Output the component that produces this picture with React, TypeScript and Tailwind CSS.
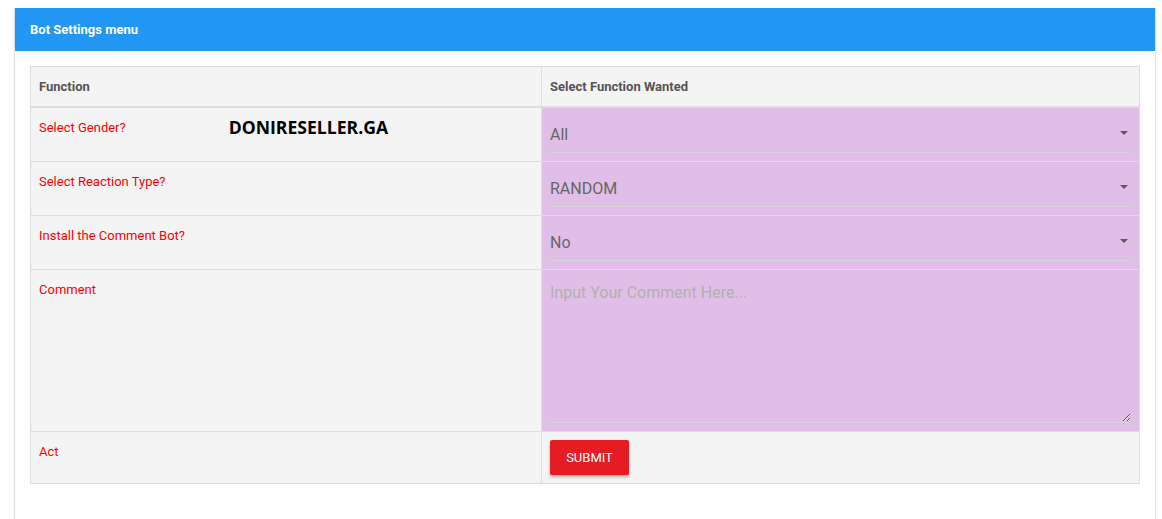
const rows = [
  { label: "Select Gender?", value: "All" },
  { label: "Select Reaction Type?", value: "RANDOM" },
  { label: "Install the Comment Bot?", value: "No" },
];

function Caret() {
  return (
    <svg width="8" height="4" viewBox="0 0 8 4" className="absolute right-[3px] top-[15px]">
      <path d="M0 0 L8 0 L4 4 Z" fill="#5a5a5a" />
    </svg>
  );
}

export default function App() {
  return (
    <div className="h-[519px] overflow-hidden bg-white pt-2 pl-[14px] pr-[6px] font-['Roboto',sans-serif]">
      <div className="border-x border-[#e0e0e0] bg-white shadow-[0_1px_2px_rgba(0,0,0,0.08)] h-[600px]">
        {/* Header */}
        <div className="h-[43px] bg-[#2196f3] flex items-center pl-[15px]">
          <span className="text-white text-[13px] font-bold">Bot Settings menu</span>
        </div>

        {/* Body */}
        <div className="p-[15px]">
          <table className="w-[1110px] border-collapse border border-[#ddd] bg-[#f4f4f4] text-[13px]">
            <thead>
              <tr className="border-b-2 border-[#ddd]">
                <th className="w-[511px] h-[40px] border-r border-[#ddd] text-left align-middle px-2 font-bold text-[#555]">
                  Function
                </th>
                <th className="h-[40px] text-left align-middle px-2 font-bold text-[#555]">
                  Select Function Wanted
                </th>
              </tr>
            </thead>
            <tbody>
              {rows.map((r, i) => (
                <tr key={r.label} className="border-b border-[#ddd]">
                  <td className="border-r border-[#ddd] align-top px-2 pt-[10px] text-[#f00] leading-5">
                    <div className="flex h-5">
                      <span>{r.label}</span>
                      {i === 0 && (
                        <span className="ml-[103px] -mt-[3px] text-[17.6px] font-bold text-black font-['Open_Sans',sans-serif] leading-6">
                          DONIRESELLER.GA
                        </span>
                      )}
                    </div>
                  </td>
                  <td className="bg-[#e1bee7] px-2 py-2 align-top">
                    <div className="relative h-[37px] border-b border-[#d4d4d4] flex items-center">
                      <span className="text-[16px] text-[#666] leading-5 mt-[3px]">{r.value}</span>
                      <Caret />
                    </div>
                  </td>
                </tr>
              ))}
              <tr className="border-b border-[#ddd]">
                <td className="h-[161px] border-r border-[#ddd] align-top px-2 pt-[10px] text-[#f00] leading-5">
                  Comment
                </td>
                <td className="bg-[#e1bee7] px-2 pt-2 pb-2 align-top">
                  <textarea
                    placeholder="Input Your Comment Here..."
                    className="block w-full h-[145px] bg-transparent border-b border-[#d4d4d4] outline-none text-[16px] leading-5 pt-[5px] text-[#666] placeholder:text-[#b0b0b0] resize-y"
                  />
                </td>
              </tr>
              <tr>
                <td className="h-[51px] border-r border-[#ddd] align-top px-2 pt-[10px] text-[#f00] leading-5">
                  Act
                </td>
                <td className="px-2 py-2 align-top">
                  <button className="h-[35px] w-[79px] rounded-[2px] bg-[#e51c23] text-white text-[13px] uppercase pt-[2px] shadow-[0_2px_3px_rgba(0,0,0,0.3)]">
                    Submit
                  </button>
                </td>
              </tr>
            </tbody>
          </table>
        </div>
      </div>
    </div>
  );
}
